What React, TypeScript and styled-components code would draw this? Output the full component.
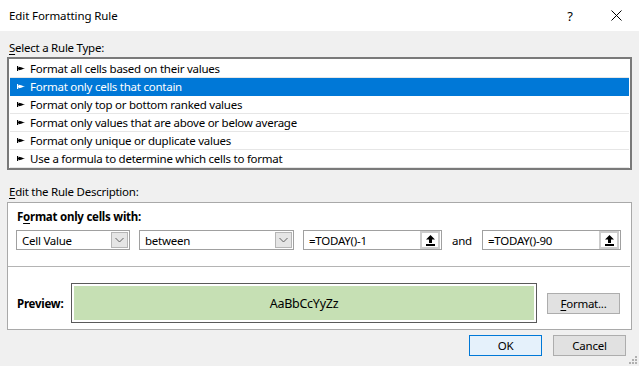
import React from 'react';
import styled, { createGlobalStyle } from 'styled-components';

const GlobalStyle = createGlobalStyle`
  html, body {
    margin: 0;
    padding: 0;
    background: #f0f0f0;
  }
  body {
    font-family: 'Noto Sans', 'Open Sans', sans-serif;
    font-size: 11.5px;
    letter-spacing: -0.25px;
    color: #000;
  }
`;

const Window = styled.div`
  position: relative;
  width: 639px;
  height: 366px;
  background: #f0f0f0;
  display: flex;
  flex-direction: column;
  overflow: hidden;
`;

const TitleBar = styled.div`
  height: 31px;
  background: #fff;
  display: flex;
  align-items: center;
  padding-left: 9px;
`;

const Title = styled.div`
  flex: 1;
  font-size: 11.5px;
  letter-spacing: -0.1px;
`;

const CaptionButton = styled.div`
  width: 46px;
  height: 31px;
  display: flex;
  align-items: center;
  justify-content: center;
  font-size: 13px;
`;

const Body = styled.div`
  padding: 0 7px;
  display: flex;
  flex-direction: column;
`;

const SectionLabel = styled.div<{ $top: number }>`
  margin-top: ${(p) => p.$top}px;
  padding-left: 2px;
  height: 16px;
  line-height: 16px;
`;

const Key = styled.span`
  text-decoration: underline;
  text-underline-offset: 2px;
`;

const ListBox = styled.div`
  margin-top: 1px;
  height: 113px;
  box-sizing: border-box;
  background: #fff;
  border: 2px solid #7a7a7a;
  padding: 1px;
`;

const RuleRow = styled.div<{ $selected?: boolean }>`
  height: 18px;
  box-sizing: border-box;
  display: flex;
  align-items: center;
  gap: 5px;
  padding-left: 7px;
  border-bottom: 1px solid ${(p) => (p.$selected ? '#0078d7' : '#e6e6e6')};
  background: ${(p) => (p.$selected ? '#0078d7' : '#fff')};
  color: ${(p) => (p.$selected ? '#fff' : '#000')};
  line-height: 16px;
`;

const GroupBox = styled.div`
  margin-top: 2px;
  height: 128px;
  box-sizing: border-box;
  background: #fff;
  border: 1px solid #a9a9a9;
  display: flex;
  flex-direction: column;
`;

const GroupTop = styled.div`
  padding: 6px 10px 0 8px;
  display: flex;
  flex-direction: column;
`;

const BoldLabel = styled.div`
  font-weight: bold;
  height: 16px;
  line-height: 16px;
  padding-left: 1px;
`;

const ControlRow = styled.div`
  margin-top: 5px;
  display: flex;
  align-items: center;
  height: 20px;
`;

const Combo = styled.div<{ $width: number; $gap: number }>`
  width: ${(p) => p.$width}px;
  margin-right: ${(p) => p.$gap}px;
  height: 20px;
  box-sizing: border-box;
  border: 1px solid #a0a0a0;
  background: #fff;
  display: flex;
  align-items: center;
  padding: 1px;
`;

const FieldText = styled.div`
  flex: 1;
  padding-left: 4px;
  white-space: nowrap;
  overflow: hidden;
`;

const ComboButton = styled.div`
  width: 17px;
  height: 16px;
  box-sizing: border-box;
  background: #e5e5e5;
  border: 1px solid #b5b5b5;
  display: flex;
  align-items: center;
  justify-content: center;
`;

const RefButton = styled.div`
  width: 20px;
  height: 18px;
  box-sizing: border-box;
  border: 2px solid #cccccc;
  background: #fff;
  display: flex;
  align-items: center;
  justify-content: center;
`;

const AndLabel = styled.div`
  width: 40px;
  text-align: center;
`;

const Divider = styled.div`
  margin-top: 16px;
  height: 1px;
  background: #b4b4b4;
  margin-right: 1px;
`;

const PreviewRow = styled.div`
  margin-top: 16px;
  display: flex;
  align-items: center;
  padding: 0 10px 0 9px;
`;

const PreviewLabel = styled.div`
  width: 54px;
  font-weight: bold;
`;

const PreviewBox = styled.div`
  width: 466px;
  height: 40px;
  box-sizing: border-box;
  border: 1px solid #5a5a5a;
  padding: 2px;
  background: #fff;
`;

const PreviewFill = styled.div`
  height: 100%;
  background: #c6e0b4;
  display: flex;
  align-items: center;
  justify-content: center;
  font-size: 12.5px;
`;

const PushButton = styled.div<{ $primary?: boolean }>`
  width: 73px;
  height: 21px;
  box-sizing: border-box;
  display: flex;
  align-items: center;
  justify-content: center;
  background: ${(p) => (p.$primary ? '#e5f1fb' : '#e1e1e1')};
  border: 1px solid ${(p) => (p.$primary ? '#0078d7' : '#adadad')};
`;

const FormatButton = styled(PushButton)`
  margin-left: 10px;
`;

const Footer = styled.div`
  margin-top: 5px;
  display: flex;
  justify-content: flex-end;
  gap: 11px;
  padding-right: 6px;
`;

const Grip = styled.svg`
  position: absolute;
  right: 2px;
  bottom: 2px;
`;

const Bullet = () => (
  <svg width="8" height="7" viewBox="0 0 8 7">
    <rect x="0" y="1" width="1.2" height="5" fill="currentColor" />
    <path d="M1 2.6 H3.5 L8 3.5 L3.5 4.4 H1 Z" fill="currentColor" />
    <path d="M2 1.8 L6 3.1 V3.9 L2 5.2 Z" fill="currentColor" />
  </svg>
);

const Chevron = () => (
  <svg width="9" height="6" viewBox="0 0 9 6">
    <path d="M0.5 1 L4.5 5 L8.5 1" fill="none" stroke="#606060" strokeWidth="1" />
  </svg>
);

const UploadIcon = () => (
  <svg width="9" height="11" viewBox="0 0 9 11">
    <path d="M4.5 0 L9 4.5 H6 V8 H3 V4.5 H0 Z" fill="#000" />
    <rect x="0" y="9" width="9" height="2" fill="#000" />
  </svg>
);

const CloseIcon = () => (
  <svg width="11" height="11" viewBox="0 0 11 11">
    <path d="M0.5 0.5 L10.5 10.5 M10.5 0.5 L0.5 10.5" stroke="#000" strokeWidth="1" />
  </svg>
);

const rules = [
  'Format all cells based on their values',
  'Format only cells that contain',
  'Format only top or bottom ranked values',
  'Format only values that are above or below average',
  'Format only unique or duplicate values',
  'Use a formula to determine which cells to format',
];

const App = () => {
  return (
    <Window>
      <GlobalStyle />
      <TitleBar>
        <Title>Edit Formatting Rule</Title>
        <CaptionButton>?</CaptionButton>
        <CaptionButton>
          <CloseIcon />
        </CaptionButton>
      </TitleBar>
      <Body>
        <SectionLabel $top={9}>
          <Key>S</Key>elect a Rule Type:
        </SectionLabel>
        <ListBox>
          {rules.map((rule, i) => (
            <RuleRow key={rule} $selected={i === 1}>
              <Bullet />
              {rule}
            </RuleRow>
          ))}
        </ListBox>
        <SectionLabel $top={14}>
          <Key>E</Key>dit the Rule Description:
        </SectionLabel>
        <GroupBox>
          <GroupTop>
            <BoldLabel>
              F<Key>o</Key>rmat only cells with:
            </BoldLabel>
            <ControlRow>
              <Combo $width={114} $gap={9}>
                <FieldText>Cell Value</FieldText>
                <ComboButton>
                  <Chevron />
                </ComboButton>
              </Combo>
              <Combo $width={155} $gap={9}>
                <FieldText>between</FieldText>
                <ComboButton>
                  <Chevron />
                </ComboButton>
              </Combo>
              <Combo $width={139} $gap={0}>
                <FieldText>=TODAY()-1</FieldText>
                <RefButton>
                  <UploadIcon />
                </RefButton>
              </Combo>
              <AndLabel>and</AndLabel>
              <Combo $width={139} $gap={0}>
                <FieldText>=TODAY()-90</FieldText>
                <RefButton>
                  <UploadIcon />
                </RefButton>
              </Combo>
            </ControlRow>
          </GroupTop>
          <Divider />
          <PreviewRow>
            <PreviewLabel>Preview:</PreviewLabel>
            <PreviewBox>
              <PreviewFill>AaBbCcYyZz</PreviewFill>
            </PreviewBox>
            <FormatButton>
              <span>
                <Key>F</Key>ormat...
              </span>
            </FormatButton>
          </PreviewRow>
        </GroupBox>
        <Footer>
          <PushButton $primary>OK</PushButton>
          <PushButton>Cancel</PushButton>
        </Footer>
      </Body>
      <Grip width="8" height="8" viewBox="0 0 8 8">
        <rect x="6" y="0" width="2" height="2" fill="#b0b0b0" />
        <rect x="3" y="3" width="2" height="2" fill="#b0b0b0" />
        <rect x="6" y="3" width="2" height="2" fill="#b0b0b0" />
        <rect x="0" y="6" width="2" height="2" fill="#b0b0b0" />
        <rect x="3" y="6" width="2" height="2" fill="#b0b0b0" />
        <rect x="6" y="6" width="2" height="2" fill="#b0b0b0" />
      </Grip>
    </Window>
  );
};

export default App;
